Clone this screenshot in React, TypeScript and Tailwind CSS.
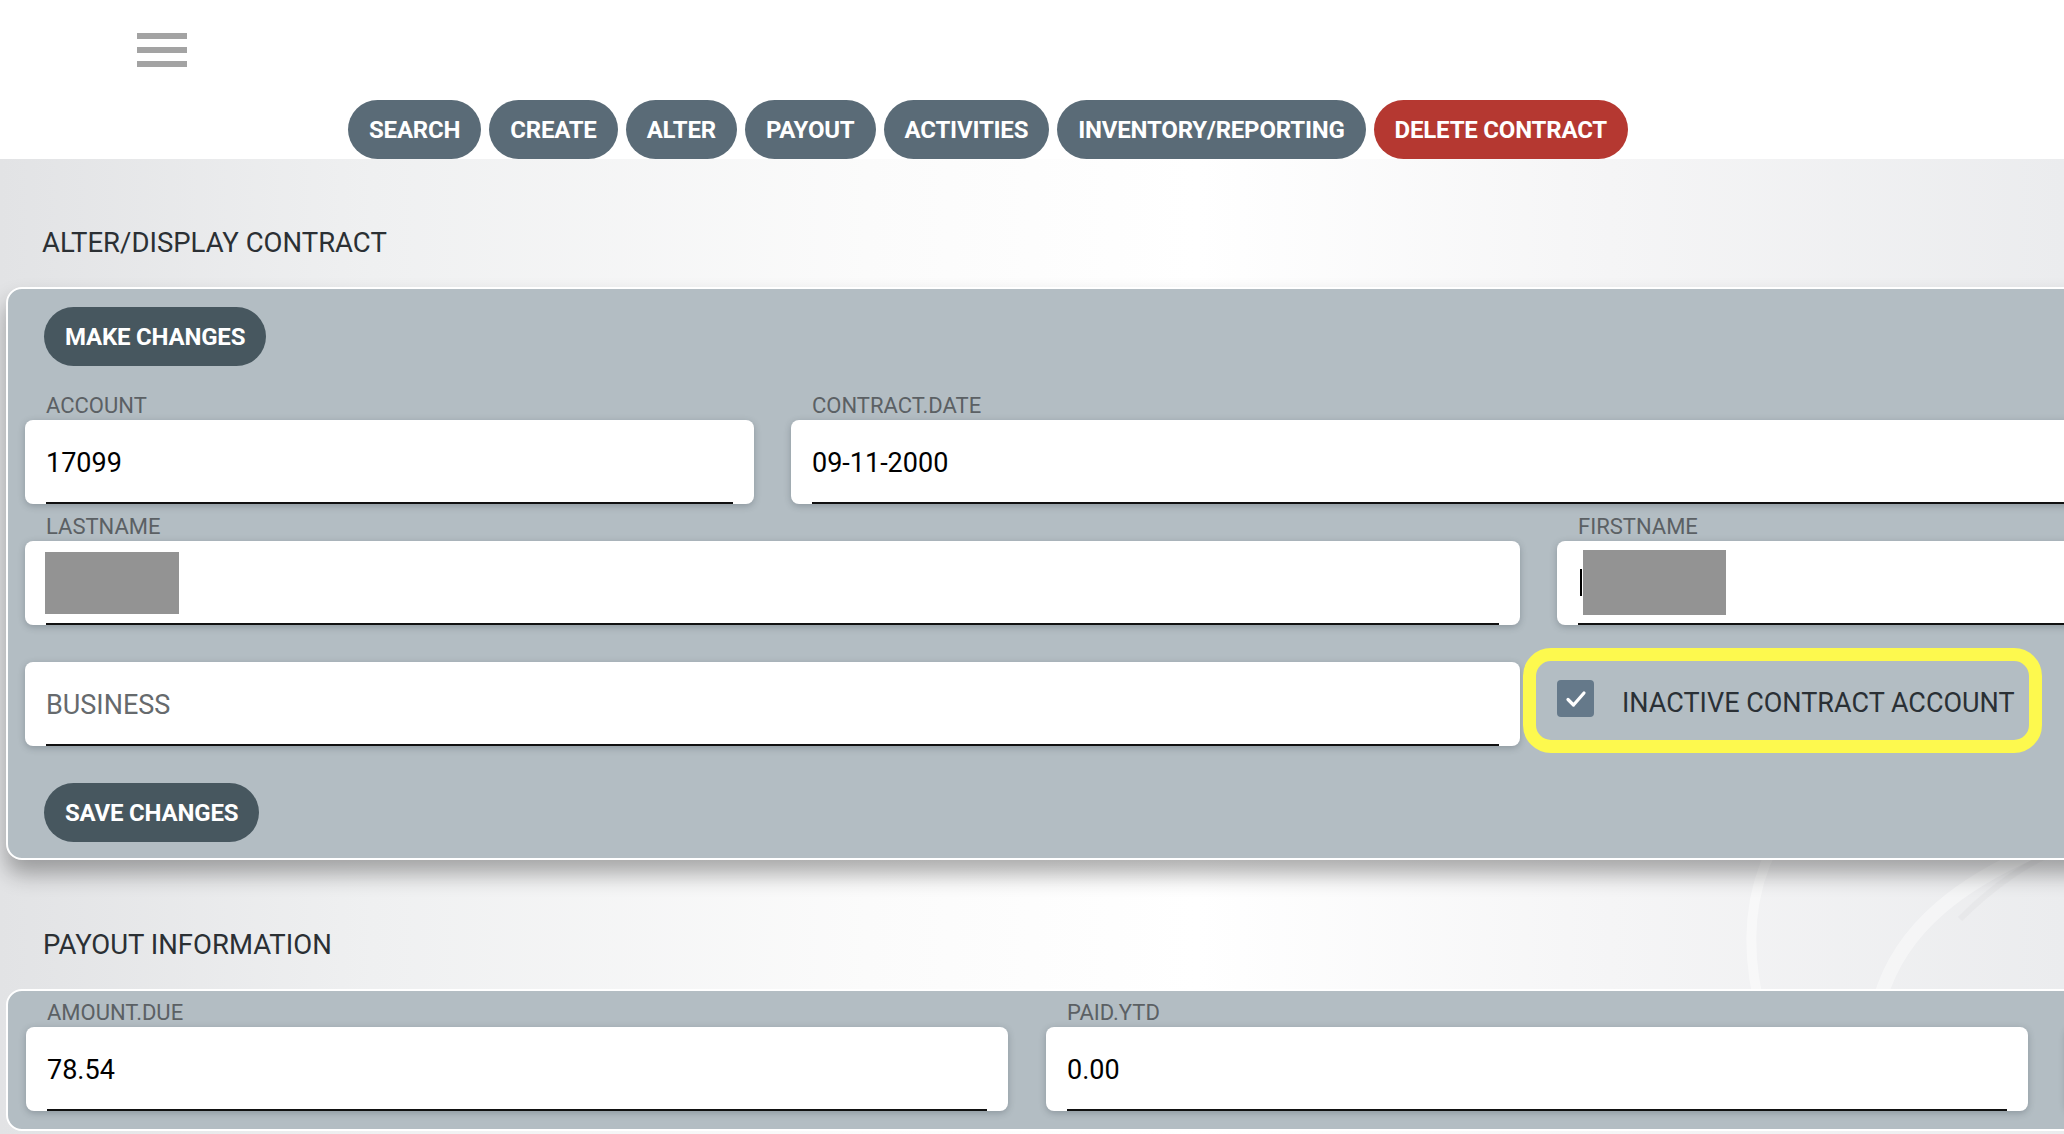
import { ReactNode } from 'react'

const navItems = ['SEARCH', 'CREATE', 'ALTER', 'PAYOUT', 'ACTIVITIES', 'INVENTORY/REPORTING']

function NavButton({ label, danger }: { label: string; danger?: boolean }) {
  return (
    <button
      className={
        'h-[59px] px-[21px] rounded-full text-white font-bold text-[24px] leading-none tracking-[-0.2px] ' +
        (danger ? 'bg-[#b53831]' : 'bg-[#5a6b77]')
      }
    >
      {label}
    </button>
  )
}

function ActionButton({ label }: { label: string }) {
  return (
    <button className="ml-[19px] h-[59px] px-[21px] rounded-full bg-[#47575f] text-white font-bold text-[24px] leading-none tracking-[-0.2px]">
      {label}
    </button>
  )
}

interface FieldProps {
  label?: string
  span?: 1 | 2
  labelHeight?: string
  children?: ReactNode
}

function Field({ label, span = 1, labelHeight = 'h-[37px] pt-[11px]', children }: FieldProps) {
  return (
    <div className={span === 2 ? 'col-span-2 flex flex-col' : 'col-span-1 flex flex-col'}>
      <div className={labelHeight + ' pl-[21px] text-[22px] leading-[24px] text-[#5b6064]'}>{label}</div>
      <div className="h-[84px] bg-white rounded-[8px] shadow-[0_2px_7px_rgba(40,50,60,0.28)] flex flex-col justify-between">
        <div className="pl-[21px] pt-[28px] text-[27px] leading-[30px] text-black">{children}</div>
        <div className="mx-[21px] h-[2px] bg-[#111]" />
      </div>
    </div>
  )
}

function Redacted({ top, width, height, cursor }: { top: string; width: string; height: string; cursor?: boolean }) {
  return (
    <div className="h-[84px] bg-white rounded-[8px] shadow-[0_2px_7px_rgba(40,50,60,0.28)] flex flex-col justify-between">
      <div className={'pl-[21px] flex items-center ' + top}>
        {cursor && <div className="w-[2px] h-[27px] bg-black mr-[1px]" />}
        <div className={'bg-[#939393] ' + width + ' ' + height} />
      </div>
      <div className="mx-[21px] h-[2px] bg-[#111]" />
    </div>
  )
}

export default function App() {
  return (
    <div className="w-screen h-screen overflow-hidden [font-family:Roboto,'Liberation_Sans',sans-serif] bg-white">
      <header className="h-[159px] bg-white">
        <div className="pt-[33px] pl-[137px] flex flex-col gap-[8px]">
          <div className="w-[50px] h-[6px] bg-[#a3a3a3]" />
          <div className="w-[50px] h-[6px] bg-[#a3a3a3]" />
          <div className="w-[50px] h-[6px] bg-[#a3a3a3]" />
        </div>
        <nav className="mt-[33px] pl-[348px] flex gap-[8px]">
          {navItems.map((n) => (
            <NavButton key={n} label={n} />
          ))}
          <NavButton label="DELETE CONTRACT" danger />
        </nav>
      </header>

      <main className="relative h-[975px] bg-[linear-gradient(90deg,#e2e3e5_0%,#eff0f1_18%,#fbfbfb_42%,#ffffff_58%,#f5f5f6_78%,#ebecee_100%)]">
        <svg className="absolute inset-0 w-full h-full pointer-events-none" viewBox="0 0 2064 975" preserveAspectRatio="none">
          <path d="M1758 840 C 1745 780, 1752 730, 1772 690" stroke="#ffffff" strokeOpacity="0.45" strokeWidth="10" fill="none" />
          <path d="M1880 840 C 1900 770, 1960 720, 2064 680" stroke="#ffffff" strokeOpacity="0.4" strokeWidth="14" fill="none" />
          <path d="M1960 760 C 1990 730, 2030 700, 2064 690" stroke="#dcdde0" strokeOpacity="0.35" strokeWidth="6" fill="none" />
        </svg>

        <div className="relative">
          <h2 className="pt-[69px] pl-[42px] text-[27.5px] leading-[30px] text-[#2b3034]">ALTER/DISPLAY CONTRACT</h2>

          <section className="mt-[29px] ml-[6px] w-[2299px] rounded-[16px] border-2 border-white bg-[#b3bdc3] pt-[18px] px-[17px] pb-[16px] shadow-[0_14px_22px_rgba(0,0,0,0.32)]">
            <ActionButton label="MAKE CHANGES" />
            <div className="mt-[17px] grid grid-cols-[repeat(3,729px)] gap-x-[37px]">
              <Field label="ACCOUNT">17099</Field>
              <Field label="CONTRACT.DATE" span={2}>
                09-11-2000
              </Field>

              <div className="col-span-2 flex flex-col">
                <div className="h-[37px] pt-[11px] pl-[21px] text-[22px] leading-[24px] text-[#5b6064]">LASTNAME</div>
                <Redacted top="pt-[11px] -ml-[1px]" width="w-[134px]" height="h-[62px]" />
              </div>
              <div className="col-span-1 flex flex-col">
                <div className="h-[37px] pt-[11px] pl-[21px] text-[22px] leading-[24px] text-[#5b6064]">FIRSTNAME</div>
                <Redacted top="pt-[9px] ml-[2px]" width="w-[143px]" height="h-[65px]" cursor />
              </div>

              <Field span={2}>
                <span className="text-[#666a6d]">BUSINESS</span>
              </Field>
              <div className="col-span-1 flex flex-col">
                <div className="h-[37px]" />
                <div className="relative h-[84px] flex items-start">
                  <div className="absolute left-[-34px] top-[-14px] w-[519px] h-[105px] border-[13px] border-[#fdf94e] rounded-[28px] pointer-events-none" />
                  <div className="mt-[18px] w-[37px] h-[37px] rounded-[4px] bg-[#65798a] flex items-center justify-center">
                    <svg width="26" height="26" viewBox="0 0 26 26">
                      <polyline points="5,13.5 10.5,19 21,7" fill="none" stroke="#ffffff" strokeWidth="3.2" strokeLinecap="round" strokeLinejoin="round" />
                    </svg>
                  </div>
                  <div className="mt-[26px] ml-[28px] text-[27px] leading-[30px] text-[#2a3035]">INACTIVE CONTRACT ACCOUNT</div>
                </div>
              </div>
            </div>
            <div className="mt-[37px]">
              <ActionButton label="SAVE CHANGES" />
            </div>
          </section>

          <h2 className="mt-[70px] pl-[43px] text-[27.5px] leading-[30px] text-[#2b3034]">PAYOUT INFORMATION</h2>

          <section className="mt-[29px] ml-[6px] w-[3062px] rounded-[16px] border-2 border-white bg-[#b3bdc3] px-[18px] pb-[18px]">
            <div className="grid grid-cols-[repeat(3,982px)] gap-x-[38px]">
              <Field label="AMOUNT.DUE" labelHeight="h-[36px] pt-[10px]">78.54</Field>
              <Field label="PAID.YTD" labelHeight="h-[36px] pt-[10px]">0.00</Field>
              <Field labelHeight="h-[36px] pt-[10px]" />
            </div>
          </section>
        </div>
      </main>
    </div>
  )
}
